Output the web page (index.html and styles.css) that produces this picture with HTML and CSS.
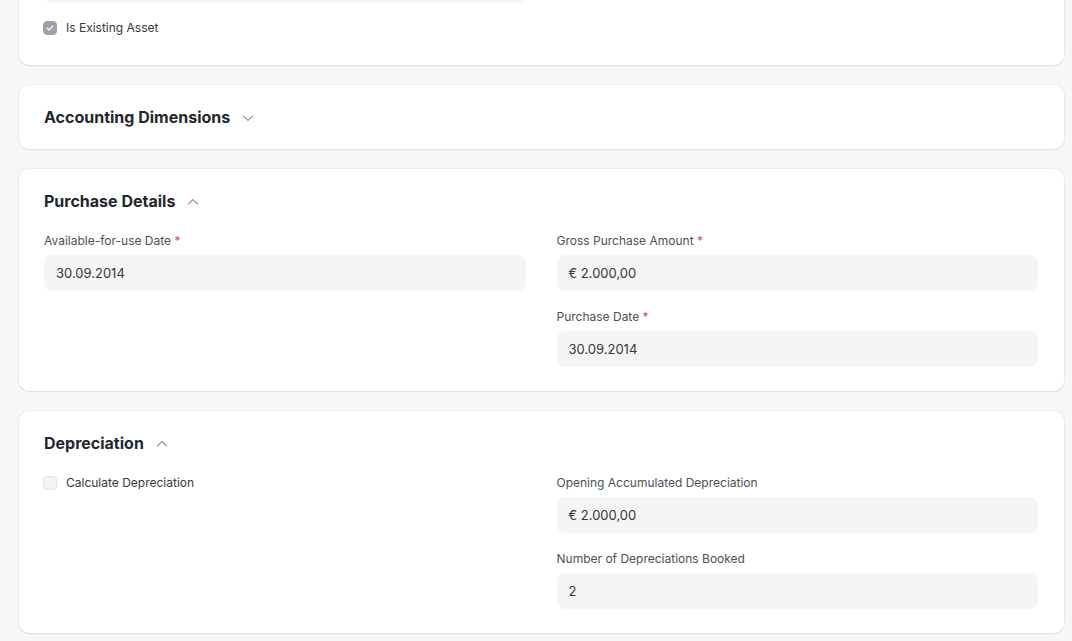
FILE: index.html
```html
<!DOCTYPE html>
<html lang="en">
<head>
<meta charset="utf-8">
<title>Asset</title>
<link rel="stylesheet" href="styles.css">
</head>
<body>
<div class="page">
  <section class="card card-first">
    <div class="grid">
      <div class="col">
        <div class="control"></div>
      </div>
      <div class="col"></div>
    </div>
    <label class="check-field">
      <span class="checkbox checked">
        <svg viewBox="0 0 14 14" width="14" height="14"><polyline points="3.8,7.2 6,9.2 10.2,4.8" fill="none" stroke="#fff" stroke-width="1.6" stroke-linecap="round" stroke-linejoin="round"/></svg>
      </span>
      <span class="check-label">Is Existing Asset</span>
    </label>
  </section>

  <section class="card">
    <div class="section-head">
      <h3>Accounting Dimensions</h3>
      <svg class="chev" viewBox="0 0 12 12" width="12" height="12"><polyline points="1.5,4 6,8.5 10.5,4" fill="none" stroke="#4a4f55" stroke-width="1" stroke-linecap="round" stroke-linejoin="round"/></svg>
    </div>
  </section>

  <section class="card">
    <div class="section-head">
      <h3>Purchase Details</h3>
      <svg class="chev" viewBox="0 0 12 12" width="12" height="12"><polyline points="1.5,8 6,3.5 10.5,8" fill="none" stroke="#4a4f55" stroke-width="1" stroke-linecap="round" stroke-linejoin="round"/></svg>
    </div>
    <div class="grid body">
      <div class="col">
        <div class="field">
          <div class="label">Available-for-use Date <span class="req">*</span></div>
          <div class="control">30.09.2014</div>
        </div>
      </div>
      <div class="col">
        <div class="field">
          <div class="label">Gross Purchase Amount <span class="req">*</span></div>
          <div class="control">€ 2.000,00</div>
        </div>
        <div class="field">
          <div class="label">Purchase Date <span class="req">*</span></div>
          <div class="control">30.09.2014</div>
        </div>
      </div>
    </div>
  </section>

  <section class="card">
    <div class="section-head">
      <h3>Depreciation</h3>
      <svg class="chev" viewBox="0 0 12 12" width="12" height="12"><polyline points="1.5,8 6,3.5 10.5,8" fill="none" stroke="#4a4f55" stroke-width="1" stroke-linecap="round" stroke-linejoin="round"/></svg>
    </div>
    <div class="grid body">
      <div class="col">
        <label class="check-field inline">
          <span class="checkbox"></span>
          <span class="check-label">Calculate Depreciation</span>
        </label>
      </div>
      <div class="col">
        <div class="field">
          <div class="label">Opening Accumulated Depreciation</div>
          <div class="control">€ 2.000,00</div>
        </div>
        <div class="field">
          <div class="label">Number of Depreciations Booked</div>
          <div class="control">2</div>
        </div>
      </div>
    </div>
  </section>
</div>
</body>
</html>
```

FILE: styles.css
```css
* { box-sizing: border-box; }

html, body {
  margin: 0;
  padding: 0;
  background: #f6f7f7;
  font-family: Inter, "Noto Sans", "Liberation Sans", sans-serif;
  color: #383838;
  overflow: hidden;
}

.page {
  margin-top: -33px;
  padding: 0 8px 20px 19px;
  display: flex;
  flex-direction: column;
  gap: 20px;
}

.card {
  background: #fff;
  border-radius: 10px;
  box-shadow: 0 0 0 1px rgba(0, 0, 0, 0.045), 0 1px 2px rgba(0, 0, 0, 0.06);
  padding: 20px 26px 20px 25px;
}

.card-first {
  padding-top: 0;
  padding-bottom: 29px;
  border-top-left-radius: 0;
  border-top-right-radius: 0;
}

.card-first .check-field {
  margin-top: 17px;
}

.section-head {
  display: flex;
  align-items: center;
  gap: 12px;
  height: 24px;
}

.section-head h3 {
  margin: 0;
  font-size: 16px;
  font-weight: 700;
  color: #1f272e;
  line-height: 24px;
}

.chev {
  display: block;
  margin-top: 2px;
}

.grid {
  display: grid;
  grid-template-columns: 1fr 1fr;
  column-gap: 31px;
}

.body {
  margin-top: 20px;
  padding-bottom: 4px;
}

.field + .field {
  margin-top: 18px;
}

.label {
  font-size: 12px;
  line-height: 16px;
  color: #4b5157;
  margin-bottom: 6px;
}

.req {
  color: #e24c4c;
}

.control {
  height: 36px;
  border-radius: 8px;
  background: #f4f5f5;
  padding: 0 12px;
  display: flex;
  align-items: center;
  font-size: 13px;
  color: #383838;
}

.check-field {
  display: flex;
  align-items: center;
  gap: 9px;
  height: 16px;
}

.check-field.inline {
  margin-top: 0;
}

.checkbox {
  width: 14px;
  height: 14px;
  border-radius: 4px;
  background: #f3f4f4;
  border: 1px solid #dfe1e2;
  display: flex;
  align-items: center;
  justify-content: center;
  flex: none;
  margin-left: -1px;
}

.checkbox.checked {
  background: #9ca2a8;
  border-color: #9ca2a8;
}

.checkbox svg {
  display: block;
  width: 12px;
  height: 12px;
}

.check-label {
  font-size: 12px;
  line-height: 16px;
  color: #383838;
}
```
